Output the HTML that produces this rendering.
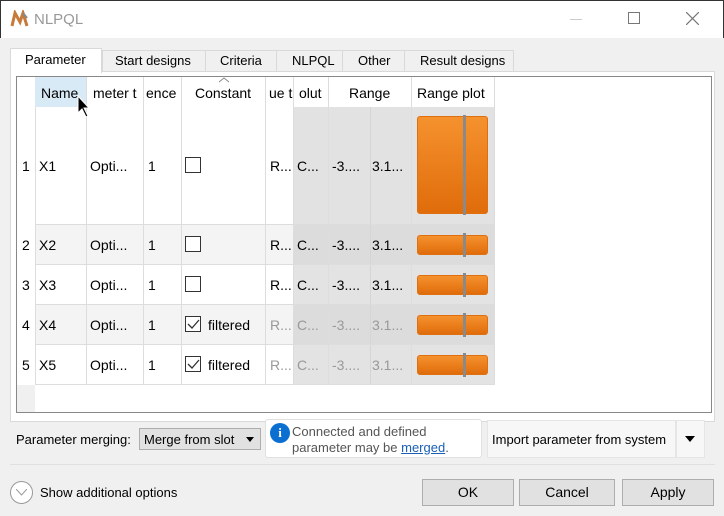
<!DOCTYPE html>
<html><head><meta charset="utf-8"><style>
*{margin:0;padding:0;box-sizing:border-box}
body{width:724px;height:516px;background:#f0f0f0;font-family:"Liberation Sans",sans-serif;font-size:13px;color:#000;position:relative;overflow:hidden}
.a{position:absolute}
.t{position:absolute;white-space:nowrap;font-size:14px}
.cb{position:absolute;width:16px;height:16px;border:1px solid #333;background:#fff}
.bar{position:absolute;left:417px;width:71px;border-radius:3px;background:linear-gradient(#f5922e,#e06c0a);border:1px solid #e0700f}
.ln{position:absolute;left:463px;width:3px;background:#8a8a8a}
.btn{position:absolute;background:#e1e1e1;border:1px solid #adadad;text-align:center;font-size:14px;line-height:24px}
</style></head><body>
<!-- title bar -->
<div class="a" style="left:0;top:0;width:724px;height:38px;background:#fff;border:1px solid #333;border-bottom:none"></div>
<svg class="a" style="left:10px;top:10px" width="20" height="18"><path d="M2 16 L5 3 L10 12 L13 3 L17 16" stroke="#c77a3a" stroke-width="3" fill="none"/><path d="M13 3 L17 8" stroke="#888" stroke-width="2"/></svg>
<div class="t" style="left:34px;top:11px;color:#999;font-size:15px">NLPQL</div>
<div class="a" style="left:570px;top:19px;width:12px;height:1px;background:#ccc"></div>
<div class="a" style="left:628px;top:12px;width:12px;height:12px;border:1px solid #777"></div>
<svg class="a" style="left:686px;top:12px" width="13" height="13"><path d="M0 0L13 13M13 0L0 13" stroke="#777" stroke-width="1.2"/></svg>
<!-- tabs -->
<div class="a" style="left:10px;top:71px;width:705px;height:351px;border:1px solid #d9d9d9;background:#fff"></div>
<div class="a" style="left:10px;top:48px;width:92px;height:25px;background:#fff;border:1px solid #d9d9d9;border-bottom:none"></div>
<div class="t" style="left:25px;top:52px;font-size:13px">Parameter</div>
<div class="a" style="left:102px;top:50px;width:412px;height:21px;background:#f0f0f0;border:1px solid #d9d9d9;border-bottom:none"></div>
<div class="a" style="left:205px;top:50px;width:1px;height:21px;background:#d9d9d9"></div>
<div class="a" style="left:276px;top:50px;width:1px;height:21px;background:#d9d9d9"></div>
<div class="a" style="left:342px;top:50px;width:1px;height:21px;background:#d9d9d9"></div>
<div class="a" style="left:404px;top:50px;width:1px;height:21px;background:#d9d9d9"></div>
<div class="t" style="left:115px;top:53px;font-size:13px">Start designs</div>
<div class="t" style="left:220px;top:53px;font-size:13px">Criteria</div>
<div class="t" style="left:292px;top:53px;font-size:13px">NLPQL</div>
<div class="t" style="left:358px;top:53px;font-size:13px">Other</div>
<div class="t" style="left:420px;top:53px;font-size:13px">Result designs</div>
<!-- table frame -->
<div class="a" style="left:16px;top:76px;width:696px;height:337px;border:1px solid #888;background:#fff"></div>
<div class="a" style="left:17px;top:385px;width:18px;height:27px;background:#f0f0f0"></div>
<!-- header -->
<div class="a" style="left:35px;top:77px;width:52px;height:30px;background:#d9eaf7"></div>
<div class="t" style="left:41px;top:85px">Name</div>
<div class="t" style="left:93px;top:85px">meter t</div>
<div class="t" style="left:146px;top:85px">ence</div>
<div class="t" style="left:195px;top:85px">Constant</div>
<div class="t" style="left:269px;top:85px">ue t</div>
<div class="t" style="left:299px;top:85px">olut</div>
<div class="t" style="left:349px;top:85px">Range</div>
<div class="t" style="left:417px;top:85px">Range plot</div>
<svg class="a" style="left:219px;top:77px" width="10" height="6"><path d="M0 5L5 1L10 5" stroke="#888" fill="none"/></svg>
<!-- row backgrounds -->
<div class="a" style="left:35px;top:225px;width:258px;height:40px;background:#f4f4f4"></div>
<div class="a" style="left:35px;top:305px;width:258px;height:40px;background:#f4f4f4"></div>
<div class="a" style="left:293px;top:107px;width:201px;height:118px;background:#e2e2e2"></div>
<div class="a" style="left:293px;top:225px;width:201px;height:40px;background:#dcdcdc"></div>
<div class="a" style="left:293px;top:265px;width:201px;height:40px;background:#e3e3e3"></div>
<div class="a" style="left:293px;top:305px;width:201px;height:40px;background:#dcdcdc"></div>
<div class="a" style="left:293px;top:345px;width:201px;height:40px;background:#e3e3e3"></div>
<!-- grid lines -->
<div class="a" style="left:35px;top:107px;width:1px;height:278px;background:#ddd"></div>
<div class="a" style="left:86px;top:77px;width:1px;height:308px;background:#ddd"></div>
<div class="a" style="left:143px;top:77px;width:1px;height:308px;background:#ddd"></div>
<div class="a" style="left:181px;top:77px;width:1px;height:308px;background:#ddd"></div>
<div class="a" style="left:265px;top:77px;width:1px;height:308px;background:#ddd"></div>
<div class="a" style="left:293px;top:77px;width:1px;height:308px;background:#ddd"></div>
<div class="a" style="left:328px;top:77px;width:1px;height:308px;background:#ddd"></div>
<div class="a" style="left:370px;top:107px;width:1px;height:278px;background:#d5d5d5"></div>
<div class="a" style="left:411px;top:77px;width:1px;height:308px;background:#ddd"></div>
<div class="a" style="left:494px;top:77px;width:1px;height:308px;background:#ddd"></div>
<div class="a" style="left:35px;top:224px;width:459px;height:1px;background:#ddd"></div>
<div class="a" style="left:35px;top:264px;width:459px;height:1px;background:#ddd"></div>
<div class="a" style="left:35px;top:304px;width:459px;height:1px;background:#ddd"></div>
<div class="a" style="left:35px;top:344px;width:459px;height:1px;background:#ddd"></div>
<div class="a" style="left:35px;top:384px;width:459px;height:1px;background:#ddd"></div>
<!-- rows -->
<div class="t" style="left:22px;top:158px">1</div><div class="t" style="left:39px;top:158px">X1</div><div class="t" style="left:90px;top:158px">Opti...</div><div class="t" style="left:148px;top:158px">1</div><div class="cb" style="left:185px;top:157px"></div><div class="t" style="left:270px;top:158px">R...</div><div class="t" style="left:297px;top:158px">C...</div><div class="t" style="left:332px;top:158px">-3....</div><div class="t" style="left:372px;top:158px">3.1...</div>
<div class="bar" style="top:116px;height:98px"></div><div class="ln" style="top:115px;height:100px"></div>

<div class="t" style="left:22px;top:237px">2</div><div class="t" style="left:39px;top:237px">X2</div><div class="t" style="left:90px;top:237px">Opti...</div><div class="t" style="left:148px;top:237px">1</div><div class="cb" style="left:185px;top:236px"></div><div class="t" style="left:270px;top:237px">R...</div><div class="t" style="left:297px;top:237px">C...</div><div class="t" style="left:332px;top:237px">-3....</div><div class="t" style="left:372px;top:237px">3.1...</div>
<div class="bar" style="top:235px;height:20px"></div><div class="ln" style="top:233px;height:24px"></div>

<div class="t" style="left:22px;top:277px">3</div><div class="t" style="left:39px;top:277px">X3</div><div class="t" style="left:90px;top:277px">Opti...</div><div class="t" style="left:148px;top:277px">1</div><div class="cb" style="left:185px;top:276px"></div><div class="t" style="left:270px;top:277px">R...</div><div class="t" style="left:297px;top:277px">C...</div><div class="t" style="left:332px;top:277px">-3....</div><div class="t" style="left:372px;top:277px">3.1...</div>
<div class="bar" style="top:275px;height:20px"></div><div class="ln" style="top:273px;height:24px"></div>

<div class="t" style="left:22px;top:317px">4</div><div class="t" style="left:39px;top:317px">X4</div><div class="t" style="left:90px;top:317px">Opti...</div><div class="t" style="left:148px;top:317px">1</div><div class="cb" style="left:185px;top:316px"></div><svg class="a" style="left:187px;top:319px" width="13" height="10"><path d="M1 5L5 9L12 1" stroke="#333" fill="none" stroke-width="1.3"/></svg><div class="t" style="left:208px;top:317px">filtered</div><div class="t" style="left:270px;top:317px;color:#999">R...</div><div class="t" style="left:297px;top:317px;color:#999">C...</div><div class="t" style="left:332px;top:317px;color:#999">-3....</div><div class="t" style="left:372px;top:317px;color:#999">3.1...</div>
<div class="bar" style="top:315px;height:20px"></div><div class="ln" style="top:313px;height:24px"></div>

<div class="t" style="left:22px;top:357px">5</div><div class="t" style="left:39px;top:357px">X5</div><div class="t" style="left:90px;top:357px">Opti...</div><div class="t" style="left:148px;top:357px">1</div><div class="cb" style="left:185px;top:356px"></div><svg class="a" style="left:187px;top:359px" width="13" height="10"><path d="M1 5L5 9L12 1" stroke="#333" fill="none" stroke-width="1.3"/></svg><div class="t" style="left:208px;top:357px">filtered</div><div class="t" style="left:270px;top:357px;color:#999">R...</div><div class="t" style="left:297px;top:357px;color:#999">C...</div><div class="t" style="left:332px;top:357px;color:#999">-3....</div><div class="t" style="left:372px;top:357px;color:#999">3.1...</div>
<div class="bar" style="top:355px;height:20px"></div><div class="ln" style="top:353px;height:24px"></div>
<!-- cursor -->
<svg class="a" style="left:77px;top:95px" width="14" height="24"><path d="M1 1L1 18L5 14L9 22L11 21L7 13L12 13Z" fill="#000" stroke="#fff" stroke-width="1"/></svg>
<!-- bottom panel -->
<div class="t" style="left:16px;top:432px;font-size:13px">Parameter merging:</div>
<div class="a" style="left:139px;top:428px;width:122px;height:22px;background:#e1e1e1;border:1px solid #adadad"></div>
<div class="t" style="left:144px;top:432px;font-size:13px">Merge from slot</div>
<svg class="a" style="left:246px;top:437px" width="8" height="5"><path d="M0 0H8L4 5Z" fill="#000"/></svg>
<div class="a" style="left:265px;top:419px;width:217px;height:39px;background:#fff;border:1px solid #e0e0e0;border-radius:3px"></div>
<div class="a" style="left:270px;top:423px;width:20px;height:20px;border-radius:50%;background:#0a6fd1;color:#fff;font-weight:bold;text-align:center;line-height:20px;font-size:13px;font-family:'Liberation Serif',serif">i</div>
<div class="t" style="left:292px;top:424px;font-size:13px;color:#555">Connected and defined</div>
<div class="t" style="left:292px;top:440px;font-size:13px;color:#555">parameter may be <span style="color:#1a5fb4;text-decoration:underline">merged</span>.</div>
<div class="a" style="left:487px;top:420px;width:189px;height:38px;background:#f7f7f7;border:1px solid #e5e5e5"></div>
<div class="t" style="left:492px;top:432px;font-size:13px">Import parameter from system</div>
<div class="a" style="left:676px;top:420px;width:29px;height:38px;background:#f7f7f7;border:1px solid #e5e5e5"></div>
<svg class="a" style="left:685px;top:436px" width="10" height="6"><path d="M0 0H10L5 6Z" fill="#000"/></svg>
<div class="a" style="left:10px;top:464px;width:705px;height:1px;background:#e0e0e0"></div>
<div class="a" style="left:10px;top:481px;width:23px;height:23px;border-radius:50%;border:1px solid #999;background:#fff"></div>
<svg class="a" style="left:16px;top:489px" width="11" height="7"><path d="M0 0L5.5 6L11 0" stroke="#999" fill="none"/></svg>
<div class="t" style="left:40px;top:485px;font-size:13px">Show additional options</div>
<div class="btn" style="left:422px;top:479px;width:92px;height:27px">OK</div>
<div class="btn" style="left:519px;top:479px;width:96px;height:27px">Cancel</div>
<div class="btn" style="left:622px;top:479px;width:92px;height:27px">Apply</div>
</body></html>
